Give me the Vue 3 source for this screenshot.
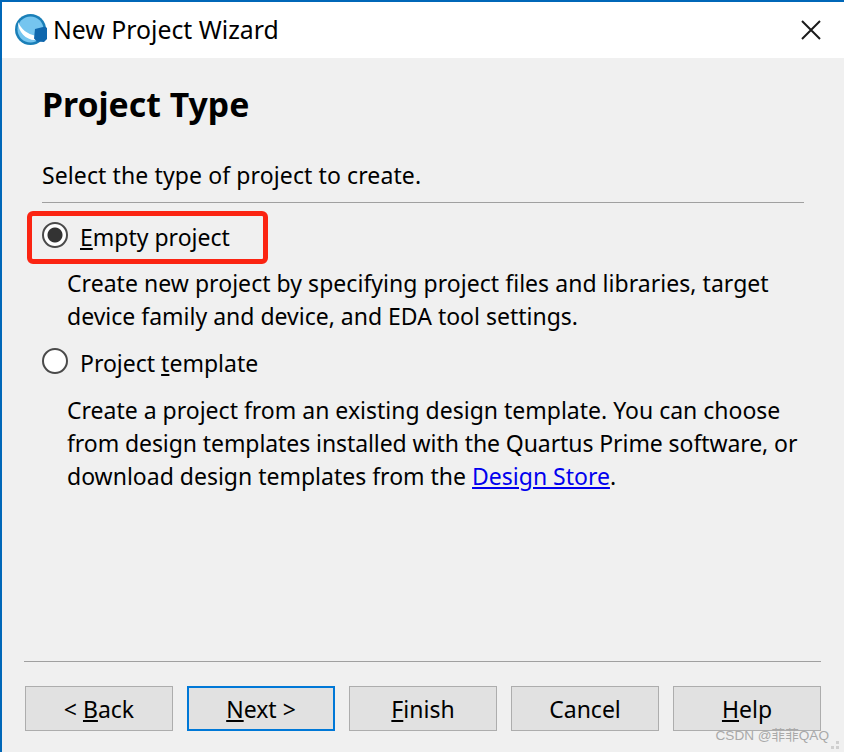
<template>
  <div class="window">
    <div class="titlebar">
      <svg class="app-icon" width="32" height="32" viewBox="0 0 32 32">
        <circle cx="15.500" cy="15.500" r="15.500" fill="#1a7fb8" />
        <circle cx="15.500" cy="15.500" r="13" fill="#75c5ef" />
        <path d="M3 8c3 7 9 12 18 14l-1 4C11 26 3 18 3 8z" fill="#fff" />
        <path d="M20 15l10-2.500 2 1.500v11l-3 3-7-.500-3-3z" fill="#0f67ad" />
      </svg>
      <span class="title">New Project Wizard</span>
      <svg class="close" width="20" height="20" viewBox="0 0 20 20">
        <path d="M1 1l18 18M19 1L1 19" stroke="#1a1a1a" stroke-width="2" fill="none" />
      </svg>
    </div>

    <div class="body">
      <h1>Project Type</h1>
      <p class="lead">Select the type of project to create.</p>
      <div class="rule"></div>

      <div class="option first">
        <span class="radio checked"></span>
        <span><u>E</u>mpty project</span>
      </div>
      <p class="desc first-desc">
        <span class="wide">Create new project by specifying project files and libraries, target</span><br />
        device family and device, and EDA tool settings.
      </p>

      <div class="option second">
        <span class="radio"></span>
        <span>Project <u>t</u>emplate</span>
      </div>
      <p class="desc second-desc">
        Create a project from an existing design template. You can choose<br />
        <span class="tight">from design templates installed with the Quartus Prime software, or</span><br />
        download design templates from the <a href="#">Design Store</a>.
      </p>
    </div>

    <div class="footer">
      <div class="footer-rule"></div>
      <div class="buttons">
        <button v-for="b in buttons" :key="b.rest" :class="{ focused: b.focused }">
          {{ b.before }}<u>{{ b.key }}</u>{{ b.rest }}
        </button>
      </div>
    </div>

    <div class="marker"></div>
    <div class="watermark">CSDN @菲菲QAQ</div>
    <div class="grip">
      <i class="skip"></i><i></i><i></i><i></i>
    </div>
  </div>
</template>

<script setup>
const buttons = [
  { before: '< ', key: 'B', rest: 'ack' },
  { before: '', key: 'N', rest: 'ext >', focused: true },
  { before: '', key: 'F', rest: 'inish' },
  { before: '', key: '', rest: 'Cancel' },
  { before: '', key: 'H', rest: 'elp' },
];
</script>

<style>
html,
body {
  margin: 0;
  background: #f0f0f0;
}
</style>

<style scoped>
.window {
  position: relative;
  width: 844px;
  height: 752px;
  box-sizing: border-box;
  border-top: 2px solid #0067b8;
  border-left: 2px solid #0067b8;
  background: #f0f0f0;
  overflow: hidden;
  display: flex;
  flex-direction: column;
  color: #000;
  font-family: "Noto Sans", sans-serif;
  font-size: 23px;
}

.titlebar {
  height: 56px;
  background: #fff;
  display: flex;
  align-items: center;
  flex: none;
  padding: 0 23px 0 13px;
}

.app-icon {
  flex: none;
}

.title {
  margin: 0 0 3px 6px;
  font-size: 24.8px;
  flex: 1;
}

.body {
  flex: 1;
  padding: 0 40px;
}

h1 {
  margin: 26px 0 0;
  font-size: 33.8px;
  line-height: 40px;
  font-weight: 700;
}

.lead {
  margin: 35px 0 0;
  line-height: 32px;
  letter-spacing: 0.11px;
}

.rule {
  height: 1px;
  width: 762px;
  margin-top: 11px;
  background: #a0a0a0;
}

.option {
  display: flex;
  align-items: center;
  gap: 12px;
  line-height: 32px;
}

.first {
  margin-top: 18px;
}

.second {
  margin-top: 14px;
}

.radio {
  box-sizing: border-box;
  width: 26px;
  height: 26px;
  margin-bottom: 4px;
  border: 2px solid #4a4a4a;
  border-radius: 50%;
  background: #fff;
  flex: none;
}

.radio.checked {
  background: radial-gradient(circle, #333 0 7px, #fff 8px);
}

.desc {
  margin: 14px 0 0 25px;
  line-height: 33px;
}

.second-desc {
  margin-top: 15px;
}

.wide {
  letter-spacing: 0.04px;
}

.tight {
  letter-spacing: -0.08px;
}

a {
  color: #0000ee;
}

.footer {
  flex: none;
  padding: 0 23px 21px 22px;
}

.footer-rule {
  height: 1px;
  background: #a0a0a0;
}

.buttons {
  display: flex;
  gap: 14px;
  margin-top: 24px;
  padding-left: 1px;
}

button {
  width: 148px;
  height: 45px;
  box-sizing: border-box;
  padding: 0;
  border: 1px solid #adadad;
  background: #e1e1e1;
  color: #000;
  font: inherit;
}

button.focused {
  border: 2px solid #0078d7;
}

.marker {
  position: absolute;
  left: 25px;
  top: 209px;
  width: 241px;
  height: 53px;
  box-sizing: border-box;
  border: 5px solid #fb2412;
  border-radius: 6px;
}

.watermark {
  position: absolute;
  right: 15px;
  bottom: 8px;
  font-size: 13.6px;
  color: #a9a9a9;
  font-family: "Liberation Sans", "Noto Sans CJK SC", sans-serif;
}

.grip {
  position: absolute;
  right: 5px;
  bottom: 3px;
  display: grid;
  grid-template-columns: 3px 3px;
  gap: 2px;
}

.grip i {
  height: 3px;
  background: #cfcfcf;
}

.grip i.skip {
  background: none;
}
</style>
